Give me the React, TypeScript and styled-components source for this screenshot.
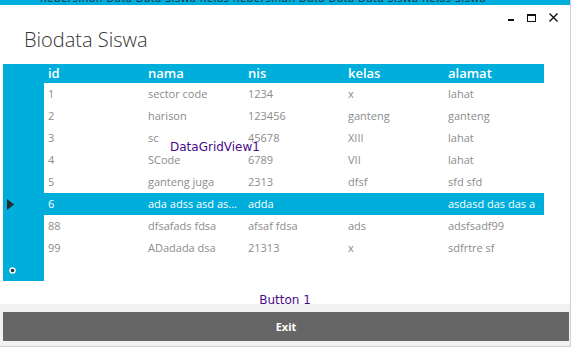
import React from 'react';
import styled, { createGlobalStyle } from 'styled-components';

const BLUE = '#00aedb';
const LABEL = '#4b0a8c';

const GlobalStyle = createGlobalStyle`
  html, body {
    margin: 0;
    padding: 0;
    background: #ffffff;
  }
  body {
    font-family: "Open Sans", "Noto Sans", sans-serif;
  }
`;

const Window = styled.div`
  width: 571px;
  height: 347px;
  border-right: 1px solid #cfcfcf;
  border-bottom: 1px solid #cfcfcf;
  box-sizing: border-box;
  display: flex;
  flex-direction: column;
  background: #ffffff;
  overflow: hidden;
`;

const TopStrip = styled.div`
  height: 5px;
  background: ${BLUE};
  overflow: hidden;
  margin-right: -3px;
  span {
    display: block;
    margin: -8px 0 0 40px;
    font-size: 11px;
    line-height: 11px;
    color: #1e3040;
    white-space: nowrap;
    letter-spacing: 0.5px;
  }
`;

const Head = styled.div`
  height: 59px;
  display: flex;
  flex-direction: column;
`;

const Controls = styled.div`
  display: flex;
  justify-content: flex-end;
  align-items: center;
  gap: 13px;
  padding: 8px 12px 0 0;
  height: 9px;
`;

const Title = styled.h1`
  margin: 4px 0 0 24px;
  font-family: "Open Sans", sans-serif;
  font-weight: 300;
  font-size: 20px;
  line-height: 28px;
  color: #333333;
`;

const GridWrap = styled.div`
  position: relative;
  margin-left: 3px;
  width: 541px;
`;

const Row = styled.div<{ $selected?: boolean; $head?: boolean }>`
  display: grid;
  grid-template-columns: 41px repeat(5, 100px);
  height: ${(p) => (p.$head ? '19px' : '22px')};
  background: ${(p) => (p.$head || p.$selected ? BLUE : '#ffffff')};
`;

const RowHeader = styled.div<{ $inset?: number }>`
  background: ${BLUE};
  display: flex;
  align-items: center;
  padding-left: ${(p) => p.$inset ?? 4}px;
`;

const Cell = styled.div<{ $head?: boolean; $selected?: boolean }>`
  padding-left: 4px;
  font-size: ${(p) => (p.$head ? '13px' : '11px')};
  font-weight: ${(p) => (p.$head ? 600 : 400)};
  line-height: ${(p) => (p.$head ? '19px' : '22px')};
  color: ${(p) => (p.$head || p.$selected ? '#ffffff' : '#8c8c8c')};
  white-space: nowrap;
  overflow: hidden;
  text-overflow: ellipsis;
`;

const Caption = styled.span`
  position: absolute;
  left: 167px;
  top: 76px;
  font-family: "DejaVu Sans", sans-serif;
  font-size: 12px;
  color: ${LABEL};
`;

const Spacer = styled.div`
  flex: 1;
`;

const ButtonLabel = styled.div`
  position: relative;
  z-index: 1;
  text-align: center;
  font-family: "DejaVu Sans", sans-serif;
  font-size: 12px;
  line-height: 14px;
  color: ${LABEL};
  margin-bottom: -6px;
  top: -3px;
`;

const Footer = styled.div`
  background: #f2f2f2;
  padding: 8px 1px 5px 3px;
`;

const ExitButton = styled.button`
  display: block;
  width: 100%;
  height: 29px;
  border: none;
  background: #666666;
  color: #ffffff;
  font-family: "Open Sans", sans-serif;
  font-weight: 700;
  font-size: 11px;
  cursor: pointer;
`;

const columns = ['id', 'nama', 'nis', 'kelas', 'alamat'];

const rows = [
  ['1', 'sector code', '1234', 'x', 'lahat'],
  ['2', 'harison', '123456', 'ganteng', 'ganteng'],
  ['3', 'sc', '45678', 'XIII', 'lahat'],
  ['4', 'SCode', '6789', 'VII', 'lahat'],
  ['5', 'ganteng juga', '2313', 'dfsf', 'sfd sfd'],
  ['6', 'ada adss asd as...', 'adda', '', 'asdasd das das a'],
  ['88', 'dfsafads fdsa', 'afsaf fdsa', 'ads', 'adsfsadf99'],
  ['99', 'ADadada dsa', '21313', 'x', 'sdfrtre sf'],
];

const Minimize = () => (
  <svg width="6" height="9" viewBox="0 0 6 9">
    <rect x="0" y="6" width="6" height="2" fill="#111" />
  </svg>
);

const Maximize = () => (
  <svg width="9" height="8" viewBox="0 0 9 8">
    <rect x="0.5" y="0.5" width="8" height="7" fill="none" stroke="#111" />
    <rect x="0" y="0" width="9" height="2" fill="#111" />
  </svg>
);

const Close = () => (
  <svg width="9" height="9" viewBox="0 0 9 9">
    <path d="M0.5 0.5 L8.5 8.5 M8.5 0.5 L0.5 8.5" stroke="#111" strokeWidth="1.4" />
  </svg>
);

const Pointer = () => (
  <svg width="7" height="11" viewBox="0 0 7 11">
    <polygon points="0,0 7,5.5 0,11" fill="#2a2a2a" />
  </svg>
);

const NewRow = () => (
  <svg width="7" height="7" viewBox="0 0 7 7">
    <circle cx="3.5" cy="3.5" r="3.2" fill="#ffffff" />
    <circle cx="3.5" cy="3.5" r="1.8" fill="#333" />
  </svg>
);

export default function App() {
  return (
    <>
      <GlobalStyle />
      <Window>
        <TopStrip>
          <span>
            Kebersihan Data Data Siswa Kelas Kebersihan Data Data Data Siswa Kelas Siswa
          </span>
        </TopStrip>
        <Head>
          <Controls>
            <Minimize />
            <Maximize />
            <Close />
          </Controls>
          <Title>Biodata Siswa</Title>
        </Head>
        <GridWrap>
          <Row $head>
            <RowHeader />
            {columns.map((c) => (
              <Cell $head key={c}>
                {c}
              </Cell>
            ))}
          </Row>
          {rows.map((r, i) => {
            const selected = r[0] === '6';
            return (
              <Row key={i} $selected={selected}>
                <RowHeader>{selected && <Pointer />}</RowHeader>
                {r.map((v, j) => (
                  <Cell key={j} $selected={selected}>
                    {v}
                  </Cell>
                ))}
              </Row>
            );
          })}
          <Row>
            <RowHeader $inset={6}>
              <NewRow />
            </RowHeader>
          </Row>
          <Caption>DataGridView1</Caption>
        </GridWrap>
        <Spacer />
        <ButtonLabel>Button 1</ButtonLabel>
        <Footer>
          <ExitButton>Exit</ExitButton>
        </Footer>
      </Window>
    </>
  );
}
